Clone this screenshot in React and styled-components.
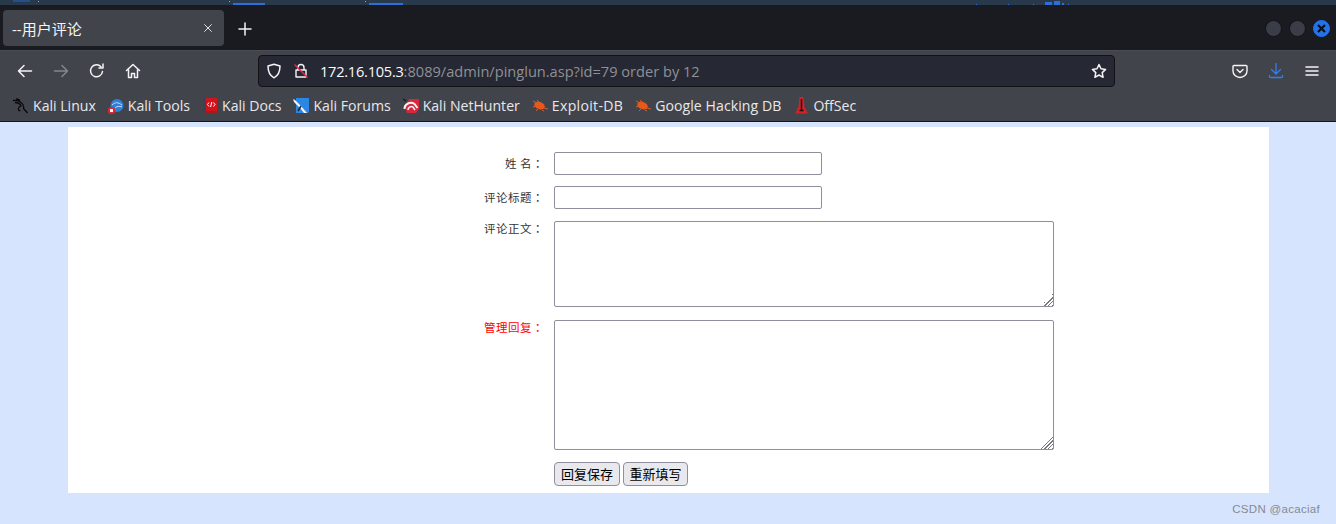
import React from 'react';
import styled, { createGlobalStyle } from 'styled-components';

const GlobalStyle = createGlobalStyle`
  html, body {
    margin: 0;
    padding: 0;
    height: 100%;
    overflow: hidden;
    background: #d6e4fd;
  }
`;

const Shell = styled.div`
  position: relative;
  width: 1336px;
  height: 524px;
  display: flex;
  flex-direction: column;
  overflow: hidden;
  font-family: "Open Sans", "Noto Sans", "Noto Sans CJK SC", sans-serif;
`;

const DesktopStrip = styled.div`
  height: 5px;
  background: #29394c;
  display: flex;
  align-items: flex-end;
  flex-shrink: 0;
`;

const StripMark = styled.div`
  height: ${(p) => p.$h || 2}px;
  width: ${(p) => p.$w}px;
  margin-left: ${(p) => p.$gap}px;
  margin-bottom: ${(p) => p.$lift || 0}px;
  background: ${(p) => p.$color || '#2a6fdc'};
`;

const Spectrum = styled.svg`
  margin-left: 573px;
  display: block;
`;

const TabBar = styled.div`
  height: 45px;
  background: #1a1b20;
  display: flex;
  align-items: center;
  padding: 0 6px 0 3px;
  box-sizing: border-box;
  flex-shrink: 0;
`;

const Tab = styled.div`
  width: 221px;
  height: 36px;
  box-sizing: border-box;
  margin-top: 1px;
  background: #42444c;
  border-radius: 4px;
  display: flex;
  align-items: center;
  justify-content: space-between;
  padding: 0 10px 0 9px;
  color: #f4f4f6;
  font-size: 15px;
`;

const NewTab = styled.div`
  margin-left: 13px;
  margin-top: 3px;
  display: flex;
  color: #f4f4f6;
`;

const WindowButtons = styled.div`
  margin-left: auto;
  margin-top: 1px;
  display: flex;
  align-items: center;
  gap: 7px;
`;

const WindowDot = styled.div`
  width: 17px;
  height: 17px;
  box-sizing: border-box;
  border-radius: 50%;
  background: ${(p) => (p.$close ? '#2472ea' : '#3a3d47')};
  border: 1px solid ${(p) => (p.$close ? '#2472ea' : '#111216')};
  display: flex;
  align-items: center;
  justify-content: center;
`;

const NavBar = styled.div`
  height: 40px;
  background: #42444c;
  border-top: 1px solid #4a4c54;
  box-sizing: border-box;
  display: flex;
  align-items: center;
  flex-shrink: 0;
  color: #f4f4f6;
`;

const NavIcon = styled.div`
  width: 36px;
  display: flex;
  justify-content: center;
  color: ${(p) => (p.$dim ? '#85868c' : '#f4f4f6')};
`;

const NavIcons = styled.div`
  width: 258px;
  flex-shrink: 0;
  display: flex;
  padding-left: 7px;
  box-sizing: border-box;
`;

const UrlBar = styled.div`
  width: 857px;
  height: 32px;
  flex-shrink: 0;
  box-sizing: border-box;
  background: #262833;
  border: 1px solid #111216;
  border-radius: 4px;
  display: flex;
  align-items: center;
  padding: 0 7px 0 7px;
  font-size: 14.6px;
`;

const UrlIcon = styled.div`
  display: flex;
  width: ${(p) => p.$w}px;
  flex-shrink: 0;
`;

const UrlHost = styled.span`
  color: #fbfbfe;
  letter-spacing: -0.25px;
`;

const UrlRest = styled.span`
  color: #8f9096;
  flex: 1;
`;

const RightIcons = styled.div`
  display: flex;
  margin-left: 107px;
`;

const RightIcon = styled.div`
  width: 36px;
  display: flex;
  justify-content: center;
  color: ${(p) => p.$color || '#f4f4f6'};
`;

const BookmarkBar = styled.div`
  height: 32px;
  background: #42444c;
  border-bottom: 1px solid #15161a;
  box-sizing: border-box;
  display: flex;
  align-items: center;
  padding: 0 0 0 13px;
  gap: 12px;
  flex-shrink: 0;
`;

const Bookmark = styled.div`
  display: flex;
  align-items: center;
  gap: 4px;
  color: #e8e8ea;
  font-size: 14.1px;
  letter-spacing: ${(p) => p.$track || 0}px;
  white-space: nowrap;
`;

const FavSlot = styled.div`
  width: 16px;
  height: 16px;
  display: flex;
  align-items: center;
  justify-content: center;
`;

const Page = styled.div`
  flex: 1;
  background: #d6e4fd;
  padding: 5px 67px 31px 68px;
  min-height: 0;
`;

const Panel = styled.form`
  background: #fff;
  height: 366px;
  box-sizing: border-box;
  padding-top: 25px;
  display: grid;
  grid-template-columns: 476px 1fr;
  column-gap: 10px;
  align-content: start;
`;

const Label = styled.label`
  font-family: "Noto Sans CJK SC", "Liberation Sans", sans-serif;
  font-size: 11.5px;
  line-height: 14px;
  color: ${(p) => (p.$red ? '#f00' : '#333')};
  letter-spacing: 0.5px;
  text-align: right;
  padding-top: ${(p) => p.$top}px;
`;

const Colon = styled.span`
  font-family: "Noto Sans CJK TC", sans-serif;
`;

const Field = styled.div`
  display: flex;
  gap: 3px;
  margin-bottom: ${(p) => p.$after}px;
`;

const TextInput = styled.input`
  width: 268px;
  height: 23px;
  box-sizing: border-box;
  border: 1px solid #8f8f9d;
  border-radius: 2px;
  background: #fff;
  padding: 1px 2px;
`;

const TextArea = styled.textarea`
  display: block;
  width: 500px;
  height: ${(p) => p.$h}px;
  box-sizing: border-box;
  border: 1px solid #8f8f9d;
  border-radius: 2px;
  background: #fff;
  padding: 2px;
  margin: 0;

  &::-webkit-resizer {
    background:
      linear-gradient(135deg, #fff 60%, transparent 60%),
      repeating-linear-gradient(135deg, #fff 0 1.6px, #77777f 1.6px 2.6px);
  }
`;

const FormButton = styled.button`
  height: 24px;
  box-sizing: border-box;
  padding: 0;
  width: ${(p) => p.$w}px;
  border: 1px solid #8f8f9d;
  border-radius: 4px;
  background: #e9e9ed;
  color: #000;
  font-family: "Noto Sans CJK SC", sans-serif;
  font-size: 13px;
  line-height: 20px;
  white-space: nowrap;
  margin: 0;
`;

const Watermark = styled.div`
  position: absolute;
  right: 16px;
  bottom: 9px;
  color: #868a94;
  font-family: "Liberation Sans", sans-serif;
  font-size: 11.5px;
  letter-spacing: 0.3px;
`;

const Ico = ({ size = 16, sw = 1.5, children }) => (
  <svg width={size} height={size} viewBox="0 0 16 16" fill="none" stroke="currentColor" strokeWidth={sw} strokeLinecap="round" strokeLinejoin="round">
    {children}
  </svg>
);

const KaliIcon = () => (
  <svg width="16" height="16" viewBox="0 0 16 16" fill="none" stroke="#08080a" strokeWidth="1.3">
    <path d="M0 2.500c3-.5 6 0 8 2 2 1.500 3 4 2.500 6l4 4.500M2 4.500c2 0 5 1 6 3.500-1.500.5-3 1.500-2.500 3.500 0 1 1 1.500 2 1M3 1c1.500 0 3 .5 4 1.500" />
  </svg>
);

const ToolsIcon = () => (
  <svg width="16" height="16" viewBox="0 0 16 16">
    <circle cx="9" cy="7.500" r="6.500" fill="#2f7fd8" />
    <path d="M4 7c3-3 6-3 10 0M7 10c2-2 4-2 7-1" stroke="#c4dcf4" strokeWidth="1" fill="none" />
    <rect x="0" y="9" width="7" height="7" rx="3" fill="#e0242c" />
    <rect x="2" y="11" width="3" height="3" fill="#fff" />
  </svg>
);

const DocsIcon = () => (
  <svg width="14" height="16" viewBox="0 0 14 16">
    <rect x="0" y="0" width="3" height="16" fill="#3a4258" />
    <rect x="3" y="0" width="11" height="13" fill="#d0141c" />
    <rect x="2" y="13" width="12" height="3" fill="#a81820" />
    <path d="M6 4.500 4.500 6.500 6 8.500M10.500 4.500l1.500 2-1.500 2M8.800 4l-1.200 5" stroke="#fff" strokeWidth="1" fill="none" />
  </svg>
);

const ForumsIcon = () => (
  <svg width="16" height="16" viewBox="0 0 16 16">
    <path d="M3 0h13v14l-1 1H3z" fill="#2b87e3" />
    <path d="M0 1l2 1 6 6 6 7h-3L7 10 1 4z" fill="#f0f4f8" />
    <path d="M8 8 5 13" stroke="#1d2430" strokeWidth="1.5" />
  </svg>
);

const HunterIcon = () => (
  <svg width="16" height="16" viewBox="0 0 16 16">
    <path d="M6 1h10v10l-3 4H4L2 9z" fill="#d8263c" />
    <path d="M1.500 11c0-5 6-8 10-5l3 4" stroke="#f4f4f4" strokeWidth="2" fill="none" />
    <path d="M5 12c0-3 3-4 5-3l2 3" stroke="#f4f4f4" strokeWidth="1.500" fill="none" />
    <path d="M0 1l3 2" stroke="#1a1a1e" strokeWidth="1.500" />
  </svg>
);

const BugIcon = () => (
  <svg width="16" height="13" viewBox="0 0 16 13">
    <ellipse cx="7.500" cy="6.500" rx="5.500" ry="3.600" fill="#e8581a" transform="rotate(22 7.500 6.500)" />
    <path d="M1 2l4 2M5 1l2 2M1 8l3-1M4 12l2-2M10 11l2 1M12 9l4 1" stroke="#c9622e" strokeWidth="1" />
  </svg>
);

const OffSecIcon = () => (
  <svg width="13" height="17" viewBox="0 0 13 17">
    <path d="M4.500 0h4l1 10 3.500 6.500H0L3.500 10z" fill="#d42028" />
    <path d="M6.500 2v12M4.500 13.500h4" stroke="#1c0c0c" strokeWidth="1.500" />
  </svg>
);

const bookmarks = [
  { name: 'Kali Linux', icon: <KaliIcon /> },
  { name: 'Kali Tools', icon: <ToolsIcon /> },
  { name: 'Kali Docs', icon: <DocsIcon /> },
  { name: 'Kali Forums', icon: <ForumsIcon /> },
  { name: 'Kali NetHunter', icon: <HunterIcon /> },
  { name: 'Exploit-DB', icon: <BugIcon />, track: 0.3 },
  { name: 'Google Hacking DB', icon: <BugIcon />, track: 0.06 },
  { name: 'OffSec', icon: <OffSecIcon /> },
];

export default function App() {
  return (
    <Shell>
      <GlobalStyle />
      <DesktopStrip>
        <StripMark $gap={13} $w={17} $h={2} $lift={3} $color="#24508c" />
        <StripMark $gap={8} $w={1} $h={1} $lift={3} $color="#9aa4b0" />
        <StripMark $gap={190} $w={1} $h={1} $lift={3} $color="#9aa4b0" />
        <StripMark $gap={3} $w={32} />
        <StripMark $gap={100} $w={1} $h={1} $lift={3} $color="#9aa4b0" />
        <StripMark $gap={3} $w={34} />
        <Spectrum width="100" height="5" viewBox="0 0 100 5">
          <path d="M0 4h1v1H0zM32 4h1v1h-1zM57 4h1v1h-1zM69 2h7v3h-7zM78 1h6v4h-6zM86 3h2v2h-2zM92 4h1v1h-1z" fill="#2a6fdc" />
        </Spectrum>
      </DesktopStrip>

      <TabBar>
        <Tab>
          --用户评论
          <Ico size={12} sw={1.2}><path d="M3.500 3.500l9 9M12.500 3.500l-9 9" /></Ico>
        </Tab>
        <NewTab>
          <Ico size={16} sw={1.5}><path d="M8 2v12M2 8h12" /></Ico>
        </NewTab>
        <WindowButtons>
          <WindowDot />
          <WindowDot />
          <WindowDot $close>
            <svg width="9" height="9" viewBox="0 0 9 9"><path d="M1 1l7 7M8 1 1 8" stroke="#0a0f1a" strokeWidth="2.2" /></svg>
          </WindowDot>
        </WindowButtons>
      </TabBar>

      <NavBar>
        <NavIcons>
          <NavIcon><Ico><path d="M14.500 8h-13M7 2.500 1.500 8 7 13.500" /></Ico></NavIcon>
          <NavIcon $dim><Ico><path d="M1.500 8h13M9 2.500 14.500 8 9 13.500" /></Ico></NavIcon>
          <NavIcon><Ico><path d="M13.500 8.500A6 6 0 1 1 12 3.800" /><path d="M14 1v4h-4" /></Ico></NavIcon>
          <NavIcon><Ico><path d="M1.500 7.500 8 1.500l6.500 6M3.500 6.500v8h3v-4h3v4h3v-8" /></Ico></NavIcon>
        </NavIcons>
        <UrlBar>
          <UrlIcon $w={27}>
            <Ico><path d="M8 1.200 14 3c0 6-1.500 9.500-6 11.800C3.500 12.500 2 9 2 3z" /></Ico>
          </UrlIcon>
          <UrlIcon $w={27}>
            <svg width="16" height="16" viewBox="0 0 16 16" fill="none">
              <path d="M5 7V4.500a3 3 0 0 1 6 0V7M3 7h10v7H3z" stroke="#f4f4f6" strokeWidth="1.4" strokeLinejoin="round" />
              <path d="M1.500 1.500l13 13" stroke="#e22850" strokeWidth="1.4" />
            </svg>
          </UrlIcon>
          <UrlHost>172.16.105.3</UrlHost>
          <UrlRest>:8089/admin/pinglun.asp?id=79 order by 12</UrlRest>
          <Ico><path d="M8 1.500l2 4.300 4.600.6-3.400 3.200.9 4.700L8 12l-4.100 2.300.9-4.700L1.400 6.400 6 5.800z" /></Ico>
        </UrlBar>
        <RightIcons>
          <RightIcon>
            <Ico sw={1.4}><path d="M2 2.500h12a1 1 0 0 1 1 1V8a7 6.500 0 0 1-14 0V3.500a1 1 0 0 1 1-1z" /><path d="M5 6.500 8 9.500l3-3" /></Ico>
          </RightIcon>
          <RightIcon $color="#2f7ff0">
            <Ico sw={1.3}><path d="M8 .5v10M3.500 6.500 8 11l4.500-4.500M1.500 12.500v1a1 1 0 0 0 1 1h11a1 1 0 0 0 1-1v-1" /></Ico>
          </RightIcon>
          <RightIcon>
            <Ico><path d="M2 4h12M2 8h12M2 12h12" /></Ico>
          </RightIcon>
        </RightIcons>
      </NavBar>

      <BookmarkBar>
        {bookmarks.map((b) => (
          <Bookmark key={b.name} $track={b.track}>
            <FavSlot>{b.icon}</FavSlot>
            {b.name}
          </Bookmark>
        ))}
      </BookmarkBar>

      <Page>
        <Panel>
          <Label $top={4}>姓 名<Colon>：</Colon></Label>
          <Field $after={11}><TextInput type="text" /></Field>
          <Label $top={4}>评论标题<Colon>：</Colon></Label>
          <Field $after={12}><TextInput type="text" /></Field>
          <Label $top={0}>评论正文<Colon>：</Colon></Label>
          <Field $after={13}><TextArea $h={86} /></Field>
          <Label $red $top={0}>管理回复<Colon>：</Colon></Label>
          <Field $after={12}><TextArea $h={130} /></Field>
          <span />
          <Field $after={0}>
            <FormButton type="button" $w={66}>回复保存</FormButton>
            <FormButton type="button" $w={65}>重新填写</FormButton>
          </Field>
        </Panel>
      </Page>

      <Watermark>CSDN @acaciaf</Watermark>
    </Shell>
  );
}
